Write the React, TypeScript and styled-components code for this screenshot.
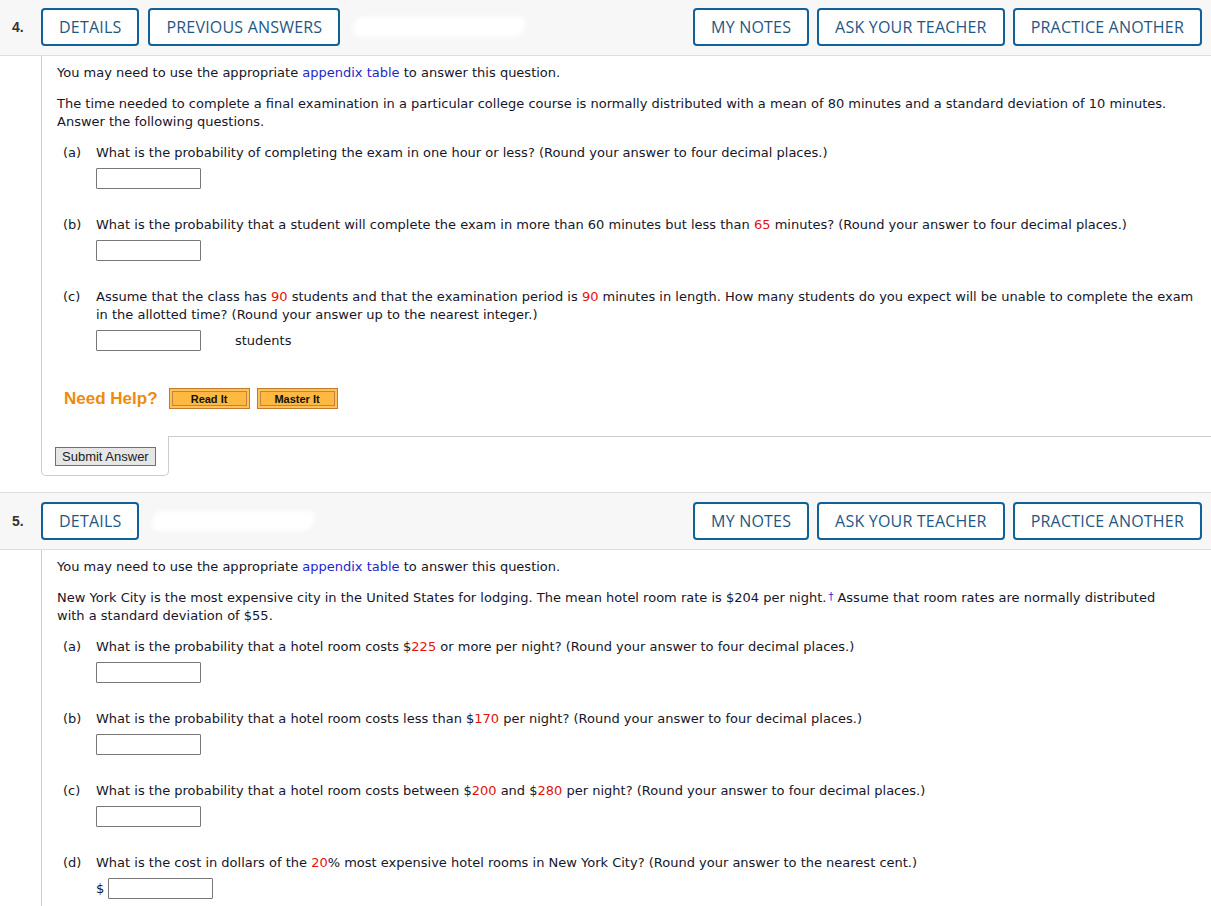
import React from 'react';
import styled, { createGlobalStyle } from 'styled-components';

//?-------------- variables ------------------//
const textColor = '#16162a';
const blueBtn = '#10609a';
const blueTxt = '#1f5784';
const red = '#e3120b';
const link = '#1f1fcc';
const line = '#cccccc';

const GlobalStyle = createGlobalStyle`
  html, body {
    margin: 0;
    padding: 0;
    background: #fff;
  }
  body {
    font-family: "DejaVu Sans", Verdana, sans-serif;
    font-size: 13px;
    color: ${textColor};
  }
`;

const Page = styled.div`
  display: flex;
  flex-direction: column;
  width: 1211px;
`;

const Question = styled.section<{ $first?: boolean }>`
  display: flex;
  flex-direction: column;
  margin-top: ${(p) => (p.$first ? '0' : '16px')};
`;

const Header = styled.div<{ $first?: boolean }>`
  display: flex;
  align-items: center;
  background: #f7f7f7;
  border-top: ${(p) => (p.$first ? 'none' : '1px solid #dddddd')};
  border-bottom: 1px solid #dddddd;
  padding: ${(p) => (p.$first ? '8px 9px 9px 0' : '9px 9px 9px 0')};
`;

const Num = styled.span`
  width: 41px;
  padding-left: 12px;
  box-sizing: border-box;
  font-family: "Liberation Sans", Arial, sans-serif;
  font-weight: 700;
  font-size: 14px;
  color: #333;
`;

const BtnGroup = styled.div<{ $right?: boolean }>`
  display: flex;
  align-items: center;
  gap: ${(p) => (p.$right ? '8px' : '9px')};
  margin-left: ${(p) => (p.$right ? 'auto' : '0')};
`;

const HeadBtn = styled.button`
  height: 38px;
  padding: 0 16px;
  border: 2px solid ${blueBtn};
  border-radius: 4px;
  background: #fff;
  color: ${blueTxt};
  font-family: "Open Sans", sans-serif;
  font-size: 16px;
  font-weight: 500;
  letter-spacing: 0.2px;
  cursor: pointer;
`;

const Redacted = styled.div<{ $w: number }>`
  width: ${(p) => p.$w}px;
  height: 20px;
  margin-left: 4px;
  background: #fff;
  border-radius: 10px 4px 12px 6px;
  filter: blur(2px);
`;

const Body = styled.div`
  margin-left: 41px;
  border-left: 1px solid ${line};
  padding: 8px 0 0 15px;
  display: flex;
  flex-direction: column;
  line-height: 18px;
`;

const Para = styled.p`
  margin: 0 0 13px 0;
  padding-right: 30px;
`;

const Link = styled.span`
  color: ${link};
`;

const Red = styled.span`
  color: ${red};
`;

const Dagger = styled.span`
  color: ${link};
  font-size: 10px;
  line-height: 10px;
  position: relative;
  top: -2px;
  margin: 0 4px 0 2px;
`;

const Part = styled.div`
  display: flex;
  padding-left: 6px;
  margin-bottom: 27px;
`;

const PartLabel = styled.span`
  width: 33px;
  flex-shrink: 0;
`;

const PartContent = styled.div`
  display: flex;
  flex-direction: column;
  padding-right: 12px;
`;

const AnswerRow = styled.div`
  display: flex;
  align-items: center;
  margin-top: 6px;
  gap: 4px;
`;

const Input = styled.input`
  width: 105px;
  height: 21px;
  box-sizing: border-box;
  border: 1px solid #777;
  border-radius: 1px;
  padding: 0 3px;
  background: #fff;
  font-family: inherit;
  font-size: 13px;
`;

const Unit = styled.span`
  margin-left: 30px;
`;

const HelpRow = styled.div`
  display: flex;
  align-items: center;
  margin: 10px 0 27px 7px;
`;

const NeedHelp = styled.span`
  font-family: "Liberation Sans", Arial, sans-serif;
  font-weight: 700;
  font-size: 17px;
  color: #ee8a10;
  margin-right: 11px;
`;

const HelpBtn = styled.button`
  width: 81px;
  height: 21px;
  margin-right: 7px;
  padding: 0;
  border: 1px solid #c47a2c;
  background: #ffb941;
  box-shadow: inset 0 0 0 2px #ffc259, inset 0 0 0 3px #c2843f;
  font-family: "Liberation Sans", Arial, sans-serif;
  font-weight: 700;
  font-size: 11px;
  color: #111;
`;

const Footer = styled.div`
  display: flex;
  margin-left: 41px;
`;

const SubmitTab = styled.div`
  width: 128px;
  height: 40px;
  box-sizing: border-box;
  border: 1px solid ${line};
  border-top: none;
  border-radius: 0 0 5px 5px;
  padding: 11px 0 0 13px;
`;

const TabRest = styled.div`
  flex: 1;
  border-top: 1px solid ${line};
`;

const SubmitBtn = styled.button`
  height: 19px;
  padding: 0 6px;
  border: 1px solid #707070;
  border-radius: 0;
  background: #e6e6e6;
  font-family: "Liberation Sans", Arial, sans-serif;
  font-size: 13px;
  color: #222;
  line-height: 17px;
`;

const Dollar = styled.span`
  margin-right: 0;
`;

export default function App() {
  return (
    <>
      <GlobalStyle />
      <Page>
        <Question $first>
          <Header $first>
            <Num>4.</Num>
            <BtnGroup>
              <HeadBtn>DETAILS</HeadBtn>
              <HeadBtn>PREVIOUS ANSWERS</HeadBtn>
              <Redacted $w={172} />
            </BtnGroup>
            <BtnGroup $right>
              <HeadBtn>MY NOTES</HeadBtn>
              <HeadBtn>ASK YOUR TEACHER</HeadBtn>
              <HeadBtn>PRACTICE ANOTHER</HeadBtn>
            </BtnGroup>
          </Header>
          <Body>
            <Para>
              You may need to use the appropriate <Link>appendix table</Link> to answer this question.
            </Para>
            <Para>
              The time needed to complete a final examination in a particular college course is normally
              distributed with a mean of 80 minutes and a standard deviation of 10 minutes. Answer the
              following questions.
            </Para>
            <Part>
              <PartLabel>(a)</PartLabel>
              <PartContent>
                <span>What is the probability of completing the exam in one hour or less? (Round your answer to four decimal places.)</span>
                <AnswerRow>
                  <Input />
                </AnswerRow>
              </PartContent>
            </Part>
            <Part>
              <PartLabel>(b)</PartLabel>
              <PartContent>
                <span>
                  What is the probability that a student will complete the exam in more than 60 minutes but
                  less than <Red>65</Red> minutes? (Round your answer to four decimal places.)
                </span>
                <AnswerRow>
                  <Input />
                </AnswerRow>
              </PartContent>
            </Part>
            <Part>
              <PartLabel>(c)</PartLabel>
              <PartContent>
                <span>
                  Assume that the class has <Red>90</Red> students and that the examination period is{' '}
                  <Red>90</Red> minutes in length. How many students do you expect will be unable to complete
                  the exam in the allotted time? (Round your answer up to the nearest integer.)
                </span>
                <AnswerRow>
                  <Input />
                  <Unit>students</Unit>
                </AnswerRow>
              </PartContent>
            </Part>
            <HelpRow>
              <NeedHelp>Need Help?</NeedHelp>
              <HelpBtn>Read It</HelpBtn>
              <HelpBtn>Master It</HelpBtn>
            </HelpRow>
          </Body>
          <Footer>
            <SubmitTab>
              <SubmitBtn>Submit Answer</SubmitBtn>
            </SubmitTab>
            <TabRest />
          </Footer>
        </Question>

        <Question>
          <Header>
            <Num>5.</Num>
            <BtnGroup>
              <HeadBtn>DETAILS</HeadBtn>
              <Redacted $w={162} />
            </BtnGroup>
            <BtnGroup $right>
              <HeadBtn>MY NOTES</HeadBtn>
              <HeadBtn>ASK YOUR TEACHER</HeadBtn>
              <HeadBtn>PRACTICE ANOTHER</HeadBtn>
            </BtnGroup>
          </Header>
          <Body>
            <Para>
              You may need to use the appropriate <Link>appendix table</Link> to answer this question.
            </Para>
            <Para>
              New York City is the most expensive city in the United States for lodging. The mean hotel room
              rate is $204 per night.<Dagger>†</Dagger>Assume that room rates are normally distributed with a
              standard deviation of $55.
            </Para>
            <Part>
              <PartLabel>(a)</PartLabel>
              <PartContent>
                <span>
                  What is the probability that a hotel room costs $<Red>225</Red> or more per night? (Round your
                  answer to four decimal places.)
                </span>
                <AnswerRow>
                  <Input />
                </AnswerRow>
              </PartContent>
            </Part>
            <Part>
              <PartLabel>(b)</PartLabel>
              <PartContent>
                <span>
                  What is the probability that a hotel room costs less than $<Red>170</Red> per night? (Round
                  your answer to four decimal places.)
                </span>
                <AnswerRow>
                  <Input />
                </AnswerRow>
              </PartContent>
            </Part>
            <Part>
              <PartLabel>(c)</PartLabel>
              <PartContent>
                <span>
                  What is the probability that a hotel room costs between $<Red>200</Red> and $<Red>280</Red>{' '}
                  per night? (Round your answer to four decimal places.)
                </span>
                <AnswerRow>
                  <Input />
                </AnswerRow>
              </PartContent>
            </Part>
            <Part>
              <PartLabel>(d)</PartLabel>
              <PartContent>
                <span>
                  What is the cost in dollars of the <Red>20</Red>% most expensive hotel rooms in New York City?
                  (Round your answer to the nearest cent.)
                </span>
                <AnswerRow>
                  <Dollar>$</Dollar>
                  <Input />
                </AnswerRow>
              </PartContent>
            </Part>
          </Body>
        </Question>
      </Page>
    </>
  );
}
